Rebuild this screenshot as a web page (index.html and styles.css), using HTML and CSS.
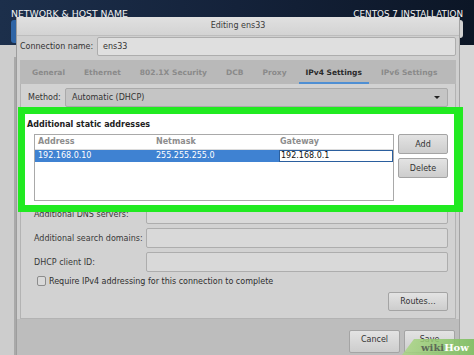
FILE: index.html
```html
<!DOCTYPE html>
<html>
<head>
  <title>Editing ens33</title>
  <link rel="stylesheet" href="styles.css">
</head>
<body>
  <div class="topbar">
    <span class="spoke-title">NETWORK &amp; HOST NAME</span>
    <span class="product">CENTOS 7 INSTALLATION</span>
  </div>
  <div class="done-btn"></div>
  <div class="help-btn"></div>
  <div class="side-line"></div>

  <div class="dialog">
    <div class="titlebar">Editing ens33</div>

    <div class="conn-row">
      <span class="conn-label">Connection name:</span>
      <div class="entry conn-entry">ens33</div>
    </div>

    <div class="notebook">
      <div class="tabs">
        <span class="tab">General</span>
        <span class="tab">Ethernet</span>
        <span class="tab">802.1X Security</span>
        <span class="tab">DCB</span>
        <span class="tab">Proxy</span>
        <span class="tab active">IPv4 Settings</span>
        <span class="tab">IPv6 Settings</span>
      </div>

      <div class="page">
        <div class="method-row">
          <span class="method-label">Method:</span>
          <div class="combo">Automatic (DHCP)<span class="combo-arrow"></span></div>
        </div>

        <div class="highlight">
          <div class="section-title">Additional static addresses</div>
          <div class="addr-row">
            <div class="addr-table">
              <div class="addr-head">
                <span>Address</span>
                <span>Netmask</span>
                <span>Gateway</span>
              </div>
              <div class="addr-sel">
                <span>192.168.0.10</span>
                <span>255.255.255.0</span>
                <span class="cell-edit">192.168.0.1</span>
              </div>
            </div>
            <div class="addr-buttons">
              <button class="btn">Add</button>
              <button class="btn">Delete</button>
            </div>
          </div>
        </div>

        <div class="form-grid">
          <span class="form-label">Additional DNS servers:</span>
          <div class="entry"></div>
          <span class="form-label">Additional search domains:</span>
          <div class="entry"></div>
          <span class="form-label">DHCP client ID:</span>
          <div class="entry"></div>
        </div>

        <div class="check-row">
          <span class="checkbox"></span>
          <span>Require IPv4 addressing for this connection to complete</span>
        </div>

        <div class="routes-row">
          <button class="btn routes-btn">Routes…</button>
        </div>
      </div>
    </div>

    <div class="footer">
      <button class="btn foot-btn">Cancel</button>
      <button class="btn foot-btn">Save</button>
    </div>
  </div>

  <div class="watermark"><span class="wm-wiki">wiki</span><span class="wm-how">How</span></div>
</body>
</html>
```

FILE: styles.css
```css
* {
  box-sizing: border-box;
}

html, body {
  margin: 0;
}

body {
  position: relative;
  width: 474px;
  height: 355px;
  overflow: hidden;
  font-family: "DejaVu Sans", sans-serif;
  font-size: 8px;
  color: #333;
  background: linear-gradient(to right, #cdcdcd 0, #cdcdcd 460px, #d6d6d6 460px);
}

.topbar {
  height: 45px;
  display: flex;
  justify-content: space-between;
  padding: 8px 11px 0 11px;
  background: linear-gradient(to right, #1c2f4b, #14223a 50%, #0c1626);
  color: #f2f2f2;
  font-size: 9.3px;
  line-height: 12px;
}

.product {
  font-size: 8.8px;
}

.done-btn {
  position: absolute;
  left: 11px;
  top: 20px;
  width: 12px;
  height: 23px;
  border-radius: 3px;
  background: #2f65a6;
}

.help-btn {
  position: absolute;
  left: 452px;
  top: 20px;
  width: 11px;
  height: 18px;
  border-radius: 3px;
  background: #d2d2d2;
}

.side-line {
  position: absolute;
  left: 14px;
  top: 57px;
  width: 2px;
  height: 298px;
  background: #a9a9a9;
}

.dialog {
  position: absolute;
  left: 16px;
  top: 17px;
  width: 444px;
  height: 345px;
  display: flex;
  flex-direction: column;
  background: #cfcfcf;
  border-left: 1px solid #9d9d9d;
  border-right: 1px solid #a3a3a3;
}

.titlebar {
  height: 19px;
  line-height: 18px;
  text-align: center;
  color: #3a3a3a;
  background: linear-gradient(#e0e0e0, #d3d3d3);
  border-bottom: 1px solid #bdbdbd;
}

.conn-row {
  display: flex;
  align-items: center;
  padding: 1px 3px 0 3px;
  margin-bottom: 4px;
}

.conn-label {
  width: 77px;
}

.entry {
  height: 20px;
  background: #d9d9d9;
  border: 1px solid #adadad;
  border-radius: 2px;
  line-height: 18px;
  padding-left: 5px;
}

.conn-entry {
  flex: 1;
  height: 19px;
  line-height: 17px;
  background: #dfdfdf;
}

.notebook {
  margin: 0 3px;
}

.tabs {
  display: flex;
  gap: 19px;
  height: 24px;
  padding-left: 12px;
  background: #b9b9b9;
}

.tab {
  display: flex;
  align-items: center;
  font-weight: bold;
  font-size: 7.5px;
  color: #8a8a8a;
  border-bottom: 2px solid transparent;
  padding-top: 2px;
}

.tab.active {
  color: #2a2a2a;
  padding: 2px 7px 0 7px;
  margin: 0 -7px;
  border-bottom-color: #4f8fd3;
}

.page {
  height: 235px;
  padding: 4px 7px 0 7px;
  background: #d2d2d2;
  border: 1px solid #b3b3b3;
  border-top: none;
}

.method-row {
  display: flex;
  align-items: center;
}

.method-label {
  width: 37px;
}

.combo {
  position: relative;
  flex: 1;
  height: 19px;
  line-height: 17px;
  padding-left: 6px;
  background: #c5c5c5;
  border: 1px solid #aaaaaa;
  border-radius: 2px;
}

.combo-arrow {
  position: absolute;
  right: 7px;
  top: 7px;
  border-left: 3px solid transparent;
  border-right: 3px solid transparent;
  border-top: 3px solid #222;
}

.highlight {
  position: relative;
  z-index: 1;
  margin: 0 -15px 0 -10px;
  padding: 6px 6px 4px 2px;
  background: #fff;
  border: 7px solid #21ea21;
  border-right-width: 9px;
}

.section-title {
  font-weight: bold;
  line-height: 10px;
  color: #222;
  margin-bottom: 4px;
}

.addr-row {
  display: flex;
  gap: 4px;
  padding-left: 7px;
}

.addr-table {
  flex: 1;
  height: 67px;
  border: 1px solid #a9a9a9;
  background: #fff;
}

.addr-head,
.addr-sel {
  display: grid;
  grid-template-columns: 118px 124px 1fr;
}

.addr-head {
  height: 15px;
  line-height: 14px;
  color: #8d8d8d;
  font-weight: bold;
  border-bottom: 1px solid #dcdcdc;
}

.addr-head span,
.addr-sel span {
  padding-left: 3px;
}

.addr-sel {
  height: 12px;
  line-height: 12px;
  background: #3f82d2;
  color: #fff;
}

.addr-sel .cell-edit {
  margin-left: 2px;
  padding-left: 1px;
  background: #fff;
  color: #111;
  border: 1px solid #2b5f9e;
  line-height: 10px;
}

.addr-buttons {
  display: flex;
  flex-direction: column;
  gap: 4px;
}

.btn {
  font-family: "DejaVu Sans", sans-serif;
  font-size: 8px;
  color: #333;
  background: linear-gradient(#e3e3e3, #cdcdcd);
  border: 1px solid #a4a4a4;
  border-radius: 2px;
  padding: 0;
}

.addr-buttons .btn {
  width: 50px;
  height: 20px;
}

.form-grid {
  display: grid;
  grid-template-columns: 112px 1fr;
  row-gap: 4px;
  align-items: center;
  margin-top: -8px;
  padding-left: 6px;
}

.form-label {
  color: #383838;
}

.check-row {
  display: flex;
  align-items: center;
  gap: 3px;
  margin-top: 4px;
  padding-left: 9px;
  color: #2e2e2e;
}

.checkbox {
  width: 9px;
  height: 10px;
  border: 1px solid #8c8c8c;
  border-radius: 2px;
  background: #d9d9d9;
}

.routes-row {
  display: flex;
  justify-content: flex-end;
  margin-top: 6px;
}

.routes-btn {
  width: 60px;
  height: 19px;
}

.footer {
  flex: 1;
  display: flex;
  justify-content: flex-end;
  gap: 4px;
  padding: 11px 4px 0 0;
  background: #bdbdbd;
}

.foot-btn {
  width: 51px;
  height: 23px;
  line-height: 17px;
  align-self: flex-start;
  padding-bottom: 4px;
}

.watermark {
  position: absolute;
  right: 0;
  bottom: 0;
  width: 72px;
  height: 16px;
  padding: 2px 0 0 19px;
  clip-path: polygon(12px 0, 100% 0, 100% 100%, 0 100%);
  background: linear-gradient(to right, rgba(170, 215, 130, 0.8), rgba(125, 190, 95, 0.9));
  font-family: "DejaVu Serif", serif;
  font-weight: bold;
  font-size: 10px;
  line-height: 13px;
  z-index: 2;
}

.wm-wiki {
  color: #5d6a58;
}

.wm-how {
  color: #fff;
}
```
